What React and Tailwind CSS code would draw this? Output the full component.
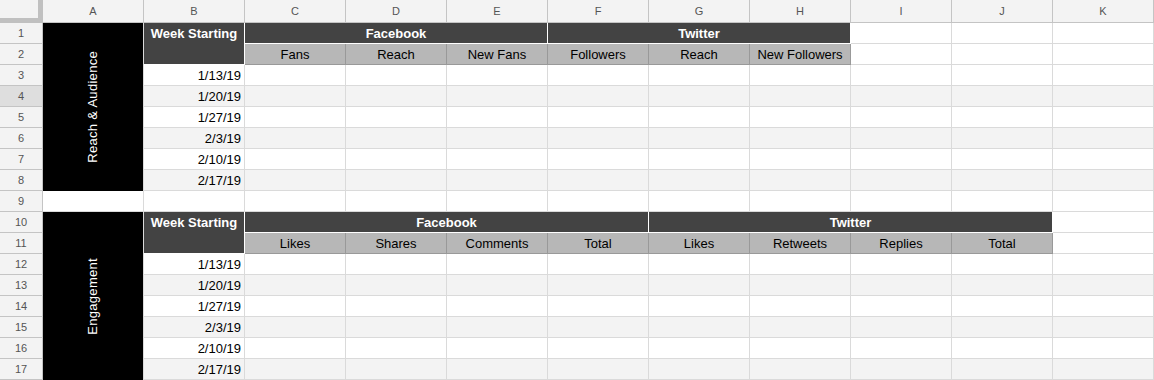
import React from 'react';

const letters = ['A', 'B', 'C', 'D', 'E', 'F', 'G', 'H', 'I', 'J', 'K'];
const dates = ['1/13/19', '1/20/19', '1/27/19', '2/3/19', '2/10/19', '2/17/19'];

const colHead = 'flex items-center justify-center bg-[#f3f3f3] border-r border-b border-[#c4c4c4] text-[11px] text-[#555555]';
const rowHead = 'flex items-center justify-center border-r border-b border-[#c4c4c4] text-[11px] text-[#555555]';
const plain = 'border-r border-b border-[#dadada]';
const dark = 'flex items-center justify-center pt-px bg-[#434343] border-r border-b border-white text-white font-bold text-[13px]';
const sub = 'flex items-center justify-center pt-[2px] bg-[#b7b7b7] border-r border-b border-[#999999] text-[13px] text-black';

const RowHeader = ({ n }) => (
  <div className={`${rowHead} ${n === 4 ? 'bg-[#dedede]' : 'bg-[#f3f3f3]'}`}>{n}</div>
);

const Blank = ({ band }) => <div className={`${plain} ${band ? 'bg-[#f3f3f3]' : 'bg-white'}`} />;

const DateRow = ({ n, date }) => {
  const band = n % 2 === (n < 10 ? 0 : 1);
  return (
    <>
      <RowHeader n={n} />
      <div
        className={`${plain} ${band ? 'bg-[#f3f3f3]' : 'bg-white'} flex items-center justify-end pt-[2px] pr-[3px] text-[13px] text-black`}
      >
        {date}
      </div>
      {Array.from({ length: 9 }).map((_, i) => (
        <Blank key={i} band={band} />
      ))}
    </>
  );
};

const Section = ({ start, label, groups, subs }) => (
  <>
    <RowHeader n={start} />
    <div className="row-span-8 flex items-center justify-center bg-black border-r border-[#dadada]">
      <span className="[writing-mode:vertical-rl] rotate-180 text-white text-[13px] tracking-[0.3px]">{label}</span>
    </div>
    <div className="row-span-2 flex justify-center pt-px bg-[#434343] border-r border-b border-white text-white font-bold text-[13px] leading-[20px]">
      Week Starting
    </div>
    {groups.map((g) => (
      <div key={g.name} className={`${dark} ${g.span}`}>
        {g.name}
      </div>
    ))}
    {Array.from({ length: 9 - subs.length }).map((_, i) => (
      <Blank key={i} />
    ))}

    <RowHeader n={start + 1} />
    {subs.map((s, i) => (
      <div key={i} className={sub}>
        {s}
      </div>
    ))}
    {Array.from({ length: 9 - subs.length }).map((_, i) => (
      <Blank key={i} />
    ))}

    {dates.map((d, i) => (
      <DateRow key={d} n={start + 2 + i} date={d} />
    ))}
  </>
);

export default function App() {
  return (
    <div className="w-[1154px] h-[380px] overflow-hidden bg-white font-['Liberation_Sans',Arial,sans-serif]">
      <div className="grid grid-cols-[43px_repeat(11,101px)] grid-rows-[23px_repeat(17,21px)]">
        <div className="bg-[#f3f3f3] border-r-[5px] border-b-[5px] border-[#c0c0c0]" />
        {letters.map((l) => (
          <div key={l} className={colHead}>
            {l}
          </div>
        ))}

        <Section
          start={1}
          label="Reach & Audience"
          groups={[
            { name: 'Facebook', span: 'col-span-3' },
            { name: 'Twitter', span: 'col-span-3' },
          ]}
          subs={['Fans', 'Reach', 'New Fans', 'Followers', 'Reach', 'New Followers']}
        />

        <RowHeader n={9} />
        {Array.from({ length: 11 }).map((_, i) => (
          <Blank key={i} />
        ))}

        <Section
          start={10}
          label="Engagement"
          groups={[
            { name: 'Facebook', span: 'col-span-4' },
            { name: 'Twitter', span: 'col-span-4' },
          ]}
          subs={['Likes', 'Shares', 'Comments', 'Total', 'Likes', 'Retweets', 'Replies', 'Total']}
        />
      </div>
    </div>
  );
}
